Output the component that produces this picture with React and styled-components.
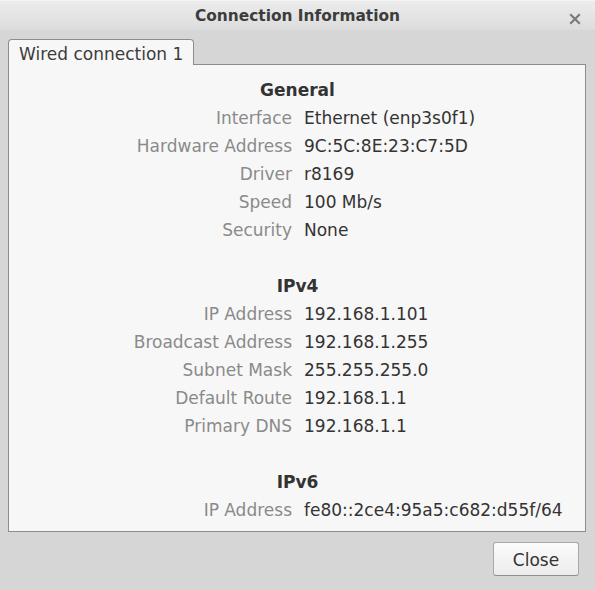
import React from "react";
import styled, { createGlobalStyle } from "styled-components";

const GlobalStyle = createGlobalStyle`
  html, body {
    margin: 0;
    padding: 0;
    background: #d6d6d6;
  }
  * {
    box-sizing: border-box;
  }
`;

const Window = styled.div`
  width: 595px;
  height: 590px;
  display: flex;
  flex-direction: column;
  background: #d6d6d6;
  font-family: "DejaVu Sans", sans-serif;
  font-size: 17px;
  color: #333333;
  overflow: hidden;
`;

const TitleBar = styled.div`
  position: relative;
  height: 30px;
  display: flex;
  align-items: center;
  justify-content: center;
  background: linear-gradient(#ececec, #dcdcdc);
  border-top: 1px solid #f4f4f4;
`;

const Title = styled.div`
  font-size: 15.4px;
  font-weight: 700;
  color: #3c3c3c;
`;

// 닫기 x 아이콘
const CloseX = styled.div`
  position: absolute;
  right: 14px;
  top: 8px;
  width: 12px;
  height: 12px;
`;

const Body = styled.div`
  flex: 1;
  display: flex;
  flex-direction: column;
  padding: 9px 9px 0 8px;
`;

const TabRow = styled.div`
  display: flex;
  margin-bottom: -1px;
  position: relative;
  z-index: 1;
`;

const Tab = styled.div`
  width: 186px;
  height: 26px;
  display: flex;
  align-items: center;
  padding: 2px 0 0 10px;
  color: #3c3c3c;
  background: #f7f7f7;
  border: 1px solid #8c8c8c;
  border-bottom: none;
  border-radius: 4px 4px 0 0;
`;

const Panel = styled.div`
  height: 468px;
  background: #f7f7f7;
  border: 1px solid #8c8c8c;
  padding-top: 11px;
`;

const Section = styled.div`
  display: grid;
  grid-template-columns: 283px auto;
  column-gap: 12px;
  grid-auto-rows: 28px;
  margin-bottom: 28px;
`;

const Heading = styled.div`
  grid-column: 1 / span 2;
  justify-self: center;
  align-self: center;
  width: 577px;
  text-align: center;
  font-weight: 700;
  color: #333333;
`;

const Label = styled.div`
  align-self: center;
  text-align: right;
  color: #8a8a8a;
  white-space: nowrap;
`;

const Value = styled.div`
  align-self: center;
  color: #333333;
  white-space: nowrap;
`;

const Footer = styled.div`
  display: flex;
  justify-content: flex-end;
  padding: 10px 7px 0 0;
`;

const Button = styled.button`
  width: 86px;
  height: 34px;
  padding-top: 2px;
  font-family: inherit;
  font-size: 17px;
  color: #333333;
  background: linear-gradient(#fbfbfb, #ececec);
  border: 1px solid #a8a8a8;
  border-bottom-color: #8e8e8e;
  border-radius: 3px;
`;

const sections = [
  {
    title: "General",
    rows: [
      ["Interface", "Ethernet (enp3s0f1)"],
      ["Hardware Address", "9C:5C:8E:23:C7:5D"],
      ["Driver", "r8169"],
      ["Speed", "100 Mb/s"],
      ["Security", "None"],
    ],
  },
  {
    title: "IPv4",
    rows: [
      ["IP Address", "192.168.1.101"],
      ["Broadcast Address", "192.168.1.255"],
      ["Subnet Mask", "255.255.255.0"],
      ["Default Route", "192.168.1.1"],
      ["Primary DNS", "192.168.1.1"],
    ],
  },
  {
    title: "IPv6",
    rows: [["IP Address", "fe80::2ce4:95a5:c682:d55f/64"]],
  },
];

export default function App() {
  return (
    <>
      <GlobalStyle />
      <Window>
        <TitleBar>
          <Title>Connection Information</Title>
          <CloseX>
            <svg width="12" height="12" viewBox="0 0 12 12">
              <path
                d="M2 2 L10 10 M10 2 L2 10"
                stroke="#7a7a7a"
                strokeWidth="2.2"
                strokeLinecap="square"
              />
            </svg>
          </CloseX>
        </TitleBar>
        <Body>
          <TabRow>
            <Tab>Wired connection 1</Tab>
          </TabRow>
          <Panel>
            {sections.map((s) => (
              <Section key={s.title}>
                <Heading>{s.title}</Heading>
                {s.rows.map(([k, v]) => (
                  <React.Fragment key={k}>
                    <Label>{k}</Label>
                    <Value>{v}</Value>
                  </React.Fragment>
                ))}
              </Section>
            ))}
          </Panel>
          <Footer>
            <Button>Close</Button>
          </Footer>
        </Body>
      </Window>
    </>
  );
}
